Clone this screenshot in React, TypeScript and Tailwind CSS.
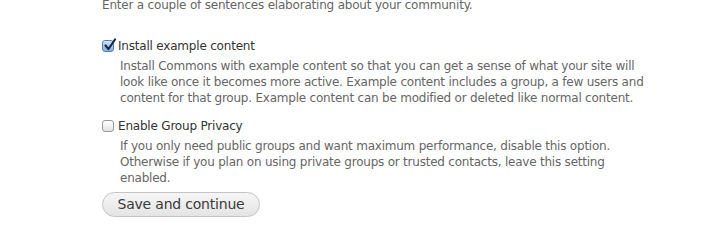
import { ReactNode } from 'react'

function Box({ checked }: { checked?: boolean }) {
  return (
    <span
      className={
        'relative inline-flex h-[12px] w-[12px] shrink-0 rounded-[3px] border ' +
        (checked
          ? 'border-[#5a7fb0] bg-gradient-to-b from-[#cfe3fa] to-[#7eaee8]'
          : 'border-[#9a9a9a] bg-gradient-to-b from-[#ffffff] to-[#e3e3e3]')
      }
    >
      {checked && (
        <svg viewBox="0 0 14 14" className="absolute left-[0px] top-[-3px] h-[14px] w-[14px]">
          <path d="M2.5 7.5 L5.5 11 L12 1.5" fill="none" stroke="#1c2b44" strokeWidth="2.2" strokeLinecap="round" strokeLinejoin="round" />
        </svg>
      )}
    </span>
  )
}

function Option({ label, checked, children }: { label: string; checked?: boolean; children: ReactNode }) {
  return (
    <div>
      <label className="flex items-center gap-[4px] text-[12px] leading-[16px] tracking-[-0.2px] text-[#333]">
        <Box checked={checked} />
        <span>{label}</span>
      </label>
      <p className="ml-[18px] mt-[4px] w-[535px] text-[12px] leading-[16px] tracking-[-0.22px] text-[#666]">
        {children}
      </p>
    </div>
  )
}

export default function App() {
  return (
    <div className="h-[244px] w-[723px] overflow-hidden bg-white font-['DejaVu_Sans',sans-serif]">
      <div className="pl-[102px]">
        <p className="-mt-[3px] text-[12px] leading-[16px] tracking-[-0.2px] text-[#666]">
          Enter a couple of sentences elaborating about your community.
        </p>
        <div className="mt-[25px] flex flex-col gap-[12px]">
          <Option label="Install example content" checked>
            Install Commons with example content so that you can get a sense of what your site will look like once it
            becomes more active. Example content includes a group, a few users and content for that group. Example
            content can be modified or deleted like normal content.
          </Option>
          <Option label="Enable Group Privacy">
            If you only need public groups and want maximum performance, disable this option. Otherwise if you plan on
            using private groups or trusted contacts, leave this setting enabled.
          </Option>
        </div>
        <button className="mt-[6px] h-[25px] w-[158px] rounded-full border border-[#c4c4c4] bg-gradient-to-b from-[#f6f6f6] to-[#e4e4e4] text-[14px] tracking-[-0.2px] text-[#3a3a3a] shadow-[0_1px_0_#ffffff]">
          Save and continue
        </button>
      </div>
    </div>
  )
}
